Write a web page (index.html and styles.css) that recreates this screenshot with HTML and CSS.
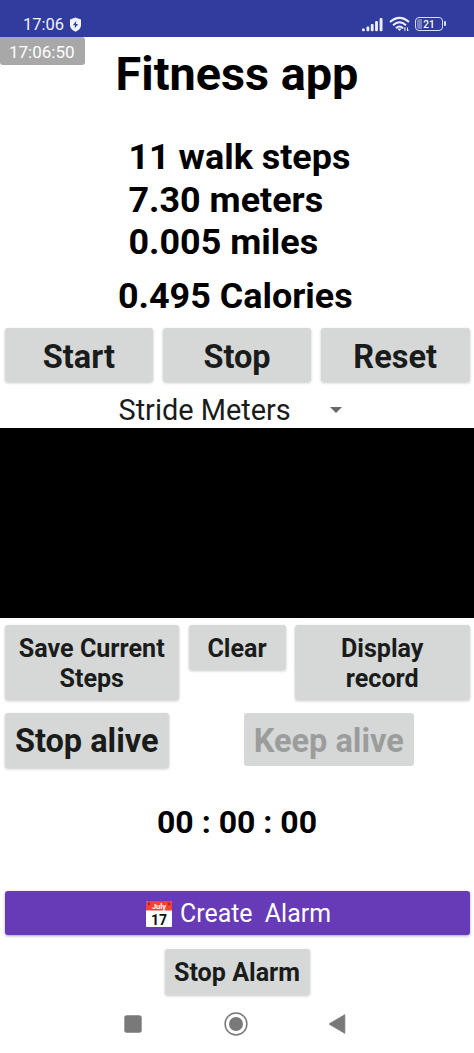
FILE: index.html
```html
<!DOCTYPE html>
<html lang="en">
<head>
<meta charset="utf-8">
<title>Fitness app</title>
<link rel="stylesheet" href="styles.css">
</head>
<body>
<header class="status">
  <span class="status-time">17:06</span>
  <svg class="shield" width="13" height="15" viewBox="0 0 13 15"><path d="M6.5 .5 12 2.6V8c0 3.300-2.700 5.500-5.500 6.700C3.700 13.500 1 11.300 1 8V2.600z" fill="#f3f2ff"/><path d="M7.300 3.700 3.900 8.200h2.200l-.5 3.300 3.500-4.600H6.900z" fill="#303c9e"/></svg>
  <svg class="signal" width="22" height="15" viewBox="0 0 22 15" fill="#eeeeff"><rect x="0" y="11.500" width="2.800" height="2.700" rx="1"/><rect x="4.500" y="9.500" width="2.800" height="4.700" rx="1"/><rect x="8.800" y="7" width="2.800" height="7.200" rx="1"/><rect x="13.100" y="4" width="2.800" height="10.200" rx="1"/><rect x="17.600" y="1" width="2.900" height="13.200" rx="1"/></svg>
  <svg class="wifi" width="21" height="16" viewBox="0 0 21 16" fill="none" stroke="#eeeeff" stroke-width="2"><path d="M1 6Q10.500-2.300 20 6"/><path d="M4 9.300Q10.500 3.300 17 9.300"/><path d="M7 12.300Q10.500 8.700 14 12.300"/><path d="M8.300 12.600h4.400l-2.200 2.500z" fill="#eeeeff" stroke="none"/><path d="M16 15v-3.500m-1.100 1.200L16 11.500M18.500 11.500V15m1.100-1.200L18.500 15" stroke-width="1"/></svg>
  <div class="battery"><span class="battery-level">21</span></div>
  <span class="clock-badge">17:06:50</span>
</header>
<main class="screen">
  <h1 class="title">Fitness app</h1>
  <div class="stats">
    <div class="steps">11 walk steps</div>
    <div class="meters">7.30 meters</div>
    <div class="miles">0.005 miles</div>
  </div>
  <div class="calories">0.495 Calories</div>
  <div class="controls">
    <button class="btn large">Start</button>
    <button class="btn large">Stop</button>
    <button class="btn large">Reset</button>
  </div>
  <div class="spinner"><span class="stride">Stride Meters</span><svg width="12" height="6" viewBox="0 0 12 6"><path d="M0 0h12L6 6z" fill="#686868"/></svg></div>
  <div class="chart"></div>
  <div class="records">
    <button class="btn">Save Current<br>Steps</button>
    <button class="btn clear">Clear</button>
    <button class="btn">Display<br>record</button>
  </div>
  <div class="alive">
    <button class="btn large stop-alive">Stop alive</button>
    <button class="btn large keep-alive" disabled>Keep alive</button>
  </div>
  <div class="timer">00 : 00 : 00</div>
  <button class="create">
    <svg class="calendar" width="26" height="26" viewBox="0 0 26 26"><rect width="26" height="26" rx="1" fill="#fff"/><path d="M0 9.500V1q0-1 1-1h24q1 0 1 1v8.500z" fill="#f44336"/><circle cx="3" cy="3" r="1.400" fill="#a82c32"/><circle cx="23" cy="3" r="1.400" fill="#a82c32"/><text x="13" y="7.500" class="cal-month">July</text><text x="13" y="23.500" class="cal-day">17</text></svg>
    <span class="create-label">Create&nbsp; Alarm</span>
  </button>
  <button class="btn stop-alarm">Stop Alarm</button>
</main>
<nav class="nav">
  <svg width="18" height="18" viewBox="0 0 18 18"><rect x=".3" y=".3" width="17.400" height="17.400" rx="2.500" fill="#797979"/></svg>
  <svg width="24" height="24" viewBox="0 0 24 24"><circle cx="12" cy="12" r="10.900" fill="none" stroke="#797979" stroke-width="1.500"/><circle cx="12" cy="12" r="7" fill="#797979"/></svg>
  <svg width="17" height="20" viewBox="0 0 17 20"><path d="M15.800.7v18.600L.8 10.600q-.9-.6 0-1.200z" fill="#797979" stroke="#797979" stroke-width=".8" stroke-linejoin="round"/></svg>
</nav>
</body>
</html>
```
FILE: styles.css
```css
* { box-sizing: border-box; }
body { margin: 0; width: 474px; height: 1053px; overflow: hidden; background: #fff; color: #000; font-family: Roboto, sans-serif; }
svg { display: block; flex: none; overflow: visible; }
button { border: 0; padding: 0; margin: 0; font-family: inherit; }

.status { position: relative; height: 37px; background: #303c9e; display: flex; align-items: flex-start; padding: 0 28px 0 23px; }
.status-time { width: 41px; margin: 15px 4.500px 0 0; font-size: 16.500px; line-height: 20px; color: #f3f2ff; white-space: nowrap; }
.shield { margin-top: 16.500px; }
.signal { margin: 17px 4.500px 0 auto; }
.wifi { margin: 16px 5.500px 0 0; }
.battery { position: relative; width: 28px; height: 14px; margin: 17px 3px 0 0; border: 1.500px solid #d9dbf5; border-radius: 4px; background: linear-gradient(90deg, #7a80c2 5px, transparent 5px); background-origin: content-box; background-clip: content-box; padding: 1px; }
.battery::after { content: ""; position: absolute; right: -4px; top: 3px; width: 2px; height: 5px; border-radius: 1px; background: #d9dbf5; }
.battery-level { display: block; text-align: center; font-size: 10px; line-height: 11px; font-weight: 500; color: #fff; }
.clock-badge { position: absolute; left: 0; top: 37px; width: 85px; height: 28px; border-radius: 0 3px 3px 3px; background: #a8a8a8; color: #fff; font-size: 17px; line-height: 30px; padding-left: 9px; white-space: nowrap; }

.screen { display: flex; flex-direction: column; }
.title { margin: 10px 0 0; font-size: 46.800px; line-height: 54px; font-weight: 700; text-align: center; }
.stats { margin: 35px 0 0 128.500px; font-size: 35.900px; line-height: 42.700px; font-weight: 700; white-space: nowrap; }
.calories { margin-top: 11px; padding-left: 118px; font-size: 35.900px; line-height: 43px; font-weight: 700; white-space: nowrap; }

.btn { background: #d6d8d7; color: #1a1c1b; border-radius: 3px; box-shadow: 0 1px 3px rgba(0, 0, 0, .22); font-size: 25.100px; line-height: 30px; font-weight: 700; white-space: nowrap; }
.large { font-size: 32.500px; }
.controls { margin-top: 10px; padding: 0 4.500px; display: grid; grid-template-columns: repeat(3, 1fr); gap: 9.500px; height: 54px; }
.controls .btn { padding-top: 4px; }
.spinner { display: flex; align-items: center; height: 36px; margin-top: 10px; padding-left: 118.500px; font-size: 28.900px; line-height: 36px; color: #1a1c1b; }
.stride { width: 211.500px; white-space: nowrap; }
.chart { height: 190px; background: #000; }
.records { display: grid; grid-template-columns: 174.500px 97px 174.500px; gap: 9.500px; padding: 0 4.500px; margin-top: 7px; height: 75px; }
.records .btn { padding-top: 2px; }
.clear { height: 45px; }
.alive { display: flex; margin-top: 12.500px; padding-left: 4.500px; height: 55px; }
.stop-alive { width: 164.500px; padding-top: 1px; }
.keep-alive { width: 169.500px; height: 53px; padding-top: 3px; margin-left: 75px; color: #9b9d9c; box-shadow: none; }
.timer { margin-top: 33px; text-align: center; font-size: 32px; line-height: 42px; font-weight: 700; }
.create { display: flex; align-items: center; justify-content: center; gap: 8.500px; height: 44px; margin: 48.500px 4.500px 0 5px; background: #673ab7; color: #fff; border-radius: 3px; box-shadow: 0 1px 3px rgba(0, 0, 0, .35); font-size: 24.900px; line-height: 30px; padding: 1px 0 0 2px; }
.cal-month { font-size: 7.500px; font-weight: 700; fill: #fff; text-anchor: middle; }
.cal-day { font-size: 14px; font-weight: 700; fill: #111; text-anchor: middle; }
.stop-alarm { width: 145px; height: 45.500px; margin: 14px auto 0; padding-top: 2px; }
.nav { display: flex; justify-content: center; align-items: center; margin: 17px 0 0; height: 24px; gap: 81.500px; padding-right: 4px; }
```
